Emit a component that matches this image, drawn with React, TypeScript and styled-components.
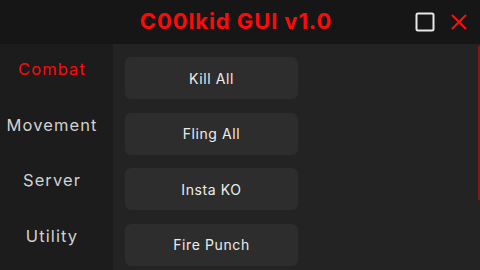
import styled, { createGlobalStyle } from 'styled-components';

const GlobalStyle = createGlobalStyle`
	html, body {
		margin: 0;
		padding: 0;
		background: #161616;
	}
	body {
		font-family: Inter, "Open Sans", sans-serif;
	}
`;

const tabs = ['Combat', 'Movement', 'Server', 'Utility'];
const actions = ['Kill All', 'Fling All', 'Insta KO', 'Fire Punch'];

const App = () => {
	return (
		<>
			<GlobalStyle />
			<Window>
				<TitleBar>
					<span />
					<Title>C00lkid GUI v1.0</Title>
					<Controls>
						<IconButton aria-label="maximize">
							<svg width="20" height="20" viewBox="0 0 20 20">
								<rect x="1.5" y="1.5" width="17" height="17" rx="1.5" fill="none" stroke="#e8e8e8" strokeWidth="2" />
							</svg>
						</IconButton>
						<IconButton aria-label="close">
							<svg width="18" height="18" viewBox="0 0 18 18">
								<path d="M2.5 2.5 L15.5 15.5 M15.5 2.5 L2.5 15.5" stroke="#ff1010" strokeWidth="2" strokeLinecap="round" />
							</svg>
						</IconButton>
					</Controls>
				</TitleBar>
				<Body>
					<Sidebar>
						{tabs.map((t, i) => (
							<Tab key={t} $active={i === 0}>{t}</Tab>
						))}
					</Sidebar>
					<Content>
						{actions.map((a) => (
							<ActionButton key={a}>{a}</ActionButton>
						))}
						<ScrollThumb />
					</Content>
				</Body>
			</Window>
		</>
	);
};

const Window = styled.div`
	width: 480px;
	height: 270px;
	display: flex;
	flex-direction: column;
	background: #161616;
	overflow: hidden;
`;

const TitleBar = styled.div`
	height: 44px;
	flex-shrink: 0;
	display: grid;
	grid-template-columns: 1fr auto 1fr;
	align-items: center;
	background: #161616;
	padding-right: 12px;
	box-sizing: border-box;
`;

const Title = styled.div`
	color: #ff0a0a;
	font-weight: 700;
	font-size: 22px;
	letter-spacing: 0.9px;
	transform: translate(2px, -1px);
`;

const Controls = styled.div`
	display: flex;
	justify-content: flex-end;
	align-items: center;
	gap: 15px;
`;

const IconButton = styled.div`
	display: flex;
	align-items: center;
	justify-content: center;
`;

const Body = styled.div`
	flex: 1;
	display: flex;
	min-height: 0;
`;

const Sidebar = styled.div`
	width: 113px;
	flex-shrink: 0;
	background: #1c1c1c;
	display: flex;
	flex-direction: column;
	gap: 5.5px;
	padding-right: 9px;
	box-sizing: border-box;
`;

const Tab = styled.div<{ $active?: boolean }>`
	height: 50px;
	display: flex;
	align-items: center;
	justify-content: center;
	font-size: 16.5px;
	letter-spacing: 1.1px;
	color: ${(p) => (p.$active ? '#ff0a0a' : '#d2d2d2')};
`;

const Content = styled.div`
	position: relative;
	flex: 1;
	background: #232323;
	display: flex;
	flex-direction: column;
	gap: 13.5px;
	padding: 13px 12px;
	overflow: hidden;
`;

const ScrollThumb = styled.div`
	position: absolute;
	top: 2px;
	right: 0;
	width: 2px;
	height: 154px;
	background: #8e1414;
`;

const ActionButton = styled.div`
	width: 173px;
	height: 42px;
	flex-shrink: 0;
	border-radius: 6px;
	background: #2d2d2d;
	color: #ececec;
	font-size: 14px;
	letter-spacing: 0.6px;
	display: flex;
	align-items: center;
	justify-content: center;
`;

export default App;
